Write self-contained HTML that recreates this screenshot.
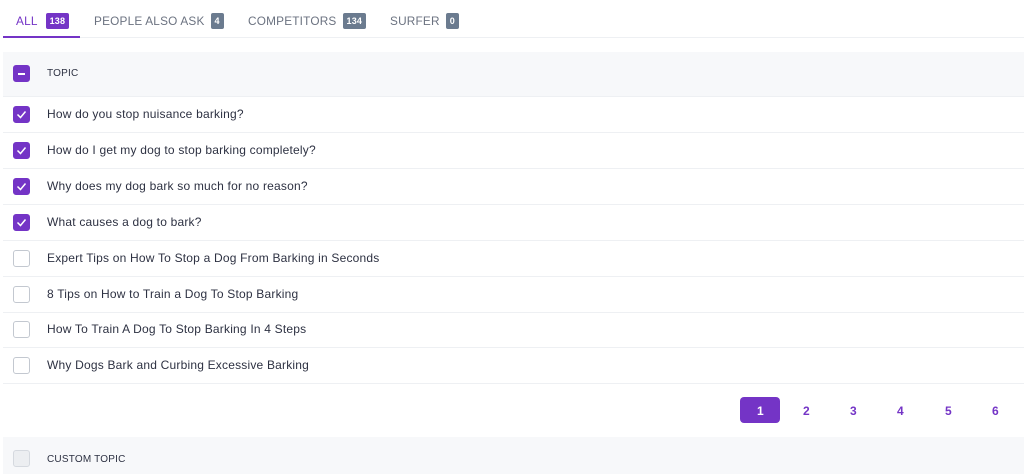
<!DOCTYPE html><html><head><style>
body{margin:0;width:1024px;height:474px;background:#fff;font-family:"Liberation Sans",sans-serif;color:#2d3142;position:relative;overflow:hidden}
.tab{position:absolute;top:13px;font-size:11.8px;color:#6b7280;letter-spacing:.2px}
.b{display:inline-block;background:#6b7b8f;color:#fff;font-size:9px;font-weight:bold;padding:3px 4px;border-radius:2px;margin-left:6px;vertical-align:1px}
.row{position:absolute;left:3px;width:1021px;height:35px;border-bottom:1px solid #eef0f3;font-size:12px;letter-spacing:.2px}
.row span{position:absolute;left:44px;top:10px}
.cb{position:absolute;left:10px;top:9px;width:15px;height:15px;border:1px solid #c3c8d0;border-radius:3px;background:#fff}
.on{background:#7434c6;border-color:#7434c6}
.pg{position:absolute;top:404px;font-size:12px;color:#7434c6;font-weight:bold}
</style></head><body>
<div class="tab" style="left:16px;color:#7434c6">ALL<span class="b" style="background:#7434c6;margin-left:8px">138</span></div>
<div style="position:absolute;left:3px;top:36px;width:77px;height:2px;background:#7434c6"></div>
<div style="position:absolute;left:80px;top:37px;width:944px;height:1px;background:#eef0f3"></div>
<div class="tab" style="left:94px">PEOPLE ALSO ASK<span class="b">4</span></div>
<div class="tab" style="left:248px">COMPETITORS<span class="b">134</span></div>
<div class="tab" style="left:390px">SURFER<span class="b">0</span></div>
<div class="row" style="top:52px;height:44px;background:#f7f8fa;font-size:10px"><div class="cb on" style="top:13px"><div style="position:absolute;left:4px;top:7px;width:7px;height:1.5px;background:#fff"></div></div><span style="top:16px">TOPIC</span></div>
<div class="row" style="top:97px"><div class="cb on"><svg width="15" height="15"><path d="M3.5 7.5l3 3 5-6" stroke="#fff" stroke-width="1.5" fill="none"/></svg></div><span>How do you stop nuisance barking?</span></div>
<div class="row" style="top:133px"><div class="cb on"><svg width="15" height="15"><path d="M3.5 7.5l3 3 5-6" stroke="#fff" stroke-width="1.5" fill="none"/></svg></div><span>How do I get my dog to stop barking completely?</span></div>
<div class="row" style="top:169px"><div class="cb on"><svg width="15" height="15"><path d="M3.5 7.5l3 3 5-6" stroke="#fff" stroke-width="1.5" fill="none"/></svg></div><span>Why does my dog bark so much for no reason?</span></div>
<div class="row" style="top:205px"><div class="cb on"><svg width="15" height="15"><path d="M3.5 7.5l3 3 5-6" stroke="#fff" stroke-width="1.5" fill="none"/></svg></div><span>What causes a dog to bark?</span></div>
<div class="row" style="top:241px"><div class="cb"></div><span>Expert Tips on How To Stop a Dog From Barking in Seconds</span></div>
<div class="row" style="top:277px"><div class="cb"></div><span>8 Tips on How to Train a Dog To Stop Barking</span></div>
<div class="row" style="top:312px"><div class="cb"></div><span>How To Train A Dog To Stop Barking In 4 Steps</span></div>
<div class="row" style="top:348px"><div class="cb"></div><span>Why Dogs Bark and Curbing Excessive Barking</span></div>
<div style="position:absolute;left:740px;top:397px;width:40px;height:26px;background:#7434c6;border-radius:4px"></div>
<div class="pg" style="left:757px;color:#fff">1</div>
<div class="pg" style="left:803px">2</div><div class="pg" style="left:850px">3</div><div class="pg" style="left:897px">4</div><div class="pg" style="left:945px">5</div><div class="pg" style="left:992px">6</div>
<div class="row" style="top:437px;height:37px;background:#f7f8fa;font-size:10px;border:0"><div class="cb" style="top:13px;background:#eceef1;border-color:#d5d9df"></div><span style="top:17px">CUSTOM TOPIC</span></div>
</body></html>
